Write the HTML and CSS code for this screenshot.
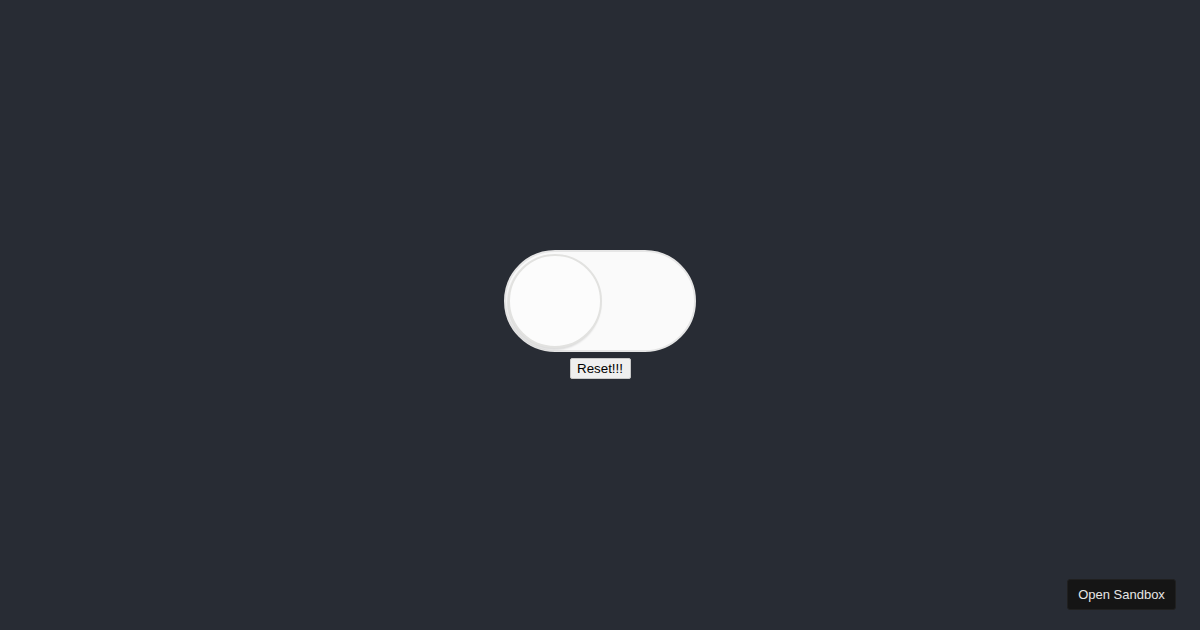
FILE: index.html
```html
<!DOCTYPE html>
<html>
<head>
<meta charset="utf-8">
<link rel="stylesheet" href="styles.css">
</head>
<body>
<main class="app">
  <div class="toggle">
    <div class="knob"></div>
  </div>
  <button class="reset">Reset!!!</button>
</main>
<a class="sandbox">Open Sandbox</a>
</body>
</html>
```
FILE: styles.css
```css
html, body {
  margin: 0;
  height: 100%;
}
body {
  background: #282c34;
  font-family: "Liberation Sans", Arial, sans-serif;
}
.app {
  height: 100%;
  display: flex;
  flex-direction: column;
  align-items: center;
  justify-content: center;
  gap: 6px;
  padding-bottom: 1px;
  box-sizing: border-box;
}
.toggle {
  box-sizing: border-box;
  width: 192px;
  height: 102px;
  border-radius: 51px;
  background: #fafafa;
  border: 2px solid #e6e6e6;
  padding: 2px;
  display: flex;
  align-items: center;
}
.knob {
  box-sizing: border-box;
  width: 94px;
  height: 94px;
  border-radius: 50%;
  background: #fcfcfc;
  border: 2px solid #e2e2e0;
  box-shadow: -1px 2px 2px rgba(0,0,0,0.12);
}
.reset {
  font-family: "Liberation Sans", Arial, sans-serif;
  font-size: 13.333px;
  color: #000;
  background: #efefef;
  border: 1px solid #c8c8c8;
  border-radius: 2px;
  padding: 1px 6px;
  height: 21px;
  width: 61px;
}
.sandbox {
  position: fixed;
  right: 24px;
  bottom: 20px;
  width: 109px;
  height: 31px;
  box-sizing: border-box;
  display: flex;
  align-items: center;
  justify-content: center;
  background: #151515;
  color: #e6e6e6;
  font-size: 13px;
  border-radius: 3px;
  border: 1px solid #202020;
}
```
